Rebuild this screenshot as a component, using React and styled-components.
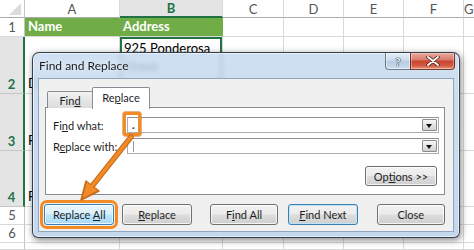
import styled, { createGlobalStyle, css } from 'styled-components'

const GlobalStyle = createGlobalStyle`
  html, body { margin: 0; padding: 0; background: #ffffff; }
  *, *::before, *::after { box-sizing: border-box; }
`

const UI_FONT = `Lato, 'Open Sans', 'Noto Sans', sans-serif`
const CELL_FONT = `Lato, 'Liberation Sans', sans-serif`
const GRID = '#d9d9d9'
const XL_GREEN = '#217346'
const ORANGE = '#f28b25'

const COLS = ['A', 'B', 'C', 'D', 'E', 'F', 'G']

// row 7 only peeks in at the bottom edge, its number lies below the window
const ROWS = [
  { n: 1, cells: { A: { text: 'Name', fill: '#70ad47' }, B: { text: 'Address', fill: '#70ad47' } } },
  { n: 2, active: true, cells: { A: { text: 'D' }, B: { text: '925 Ponderosa Street', top: true, boxed: true } } },
  { n: 3, active: true, cells: { A: { text: 'F' } } },
  { n: 4, active: true, cells: { A: { text: 'F' } } },
  { n: 5 },
  { n: 6 },
  { n: 7, hidden: true },
]

const App = () => {
  return (
    <>
      <GlobalStyle />
      <Sheet>
        <Corner />
        {COLS.map(c => (
          <ColHead key={c} $active={c === 'B'}>{c}</ColHead>
        ))}
        {ROWS.map(row => (
          <Row key={row.n} row={row} />
        ))}

        <Dialog>
          <TitleBar>
            <Title>Find and Replace</Title>
            <CaptionButtons>
              <HelpButton>?</HelpButton>
              <CloseButton>
                <svg width='14' height='10' viewBox='0 0 14 10'>
                  <path d='M2 1 L12 9 M12 1 L2 9' stroke='#4a1c14' strokeWidth='3.4' strokeLinecap='round' />
                  <path d='M2 1 L12 9 M12 1 L2 9' stroke='#ffffff' strokeWidth='1.9' strokeLinecap='round' />
                </svg>
              </CloseButton>
            </CaptionButtons>
          </TitleBar>

          <Client>
            <TabStrip>
              <Tab>Fin<u>d</u></Tab>
              <Tab $active>Re<u>p</u>lace</Tab>
            </TabStrip>
            <TabPanel>
              <FormGrid>
                <Label>Fi<u>n</u>d what:</Label>
                <Field>
                  <FieldText>.</FieldText>
                  <Marker />
                  <DropButton />
                </Field>
                <Label>R<u>e</u>place with:</Label>
                <Field>
                  <Caret />
                  <DropButton />
                </Field>
              </FormGrid>
              <OptionsRow>
                <Button $w={72} $h={20}>Op<u>t</u>ions &gt;&gt;</Button>
              </OptionsRow>
            </TabPanel>

            <ButtonRow>
              <Button $w={71} $hot $marked>Replace <u>A</u>ll</Button>
              <Button $w={70} $gap={8}><u>R</u>eplace</Button>
              <Button $w={69} $gap={18}>F<u>i</u>nd All</Button>
              <Button $w={70} $gap={10} $default><u>F</u>ind Next</Button>
              <Button $w={69} $gap={19}>Close</Button>
            </ButtonRow>
          </Client>
        </Dialog>

        <Arrow width='474' height='250' viewBox='0 0 474 250'>
          <line x1='131' y1='137' x2='93' y2='185' stroke='#c96a1c' strokeWidth='5.5' strokeLinecap='round' />
          <polygon points='81,200 99,191 86,181' fill='#c96a1c' stroke='#c96a1c' strokeWidth='1.5' strokeLinejoin='round' />
          <line x1='131' y1='137' x2='93' y2='185' stroke={ORANGE} strokeWidth='3.5' strokeLinecap='round' />
          <polygon points='82.5,198 97.5,190.5 87,182' fill={ORANGE} />
        </Arrow>
      </Sheet>
    </>
  )
}

const Row = ({ row }) => (
  <>
    <RowHead $active={row.active}>{row.hidden ? null : row.n}</RowHead>
    {COLS.map(c => {
      const cell = (row.cells && row.cells[c]) || {}
      return (
        <Cell key={c} $fill={cell.fill} $top={cell.top} $boxed={cell.boxed}>
          {cell.text}
        </Cell>
      )
    })}
  </>
)

export default App

const Sheet = styled.div`
  position: relative;
  width: 474px;
  height: 250px;
  overflow: hidden;
  display: grid;
  grid-template-columns: 25px 95px 103px 61px 60px 60px 60px 1fr;
  grid-template-rows: 18px 19px 57px 57px 56px 18px 18px 1fr;
  background: #fff;
  font-family: ${CELL_FONT};
`

const Corner = styled.div`
  position: relative;
  background: #fff;
  border-right: 1px solid #c6c6c6;
  border-bottom: 1px solid #ababab;

  &::after {
    content: '';
    position: absolute;
    right: 3px;
    bottom: 2px;
    border-style: solid;
    border-width: 0 0 12px 12px;
    border-color: transparent transparent #dcdcdc transparent;
  }
`

const ColHead = styled.div`
  display: flex;
  align-items: center;
  justify-content: center;
  font-size: 13px;
  color: #555;
  background: #fff;
  border-right: 1px solid ${GRID};
  border-bottom: 1px solid #ababab;

  ${({ $active }) => $active && css`
    background: #e4e4e4;
    color: ${XL_GREEN};
    font-weight: 700;
    border-bottom: 2px solid ${XL_GREEN};
  `}
`

const RowHead = styled.div`
  display: flex;
  align-items: flex-end;
  justify-content: center;
  padding-bottom: 1px;
  font-size: 13px;
  line-height: 16px;
  color: #555;
  background: #fff;
  border-right: 1px solid #c6c6c6;
  border-bottom: 1px solid ${GRID};

  ${({ $active }) => $active && css`
    background: #e4e4e4;
    color: ${XL_GREEN};
    font-weight: 700;
    border-right: 2px solid ${XL_GREEN};
    border-bottom-color: #c6c6c6;
  `}
`

const Cell = styled.div`
  display: flex;
  align-items: ${({ $top }) => ($top ? 'flex-start' : 'flex-end')};
  padding: ${({ $top }) => ($top ? '2px 4px 0 4px' : '0 3px 1px 3px')};
  font-size: 13px;
  line-height: 18px;
  overflow: hidden;
  white-space: ${({ $top }) => ($top ? 'normal' : 'nowrap')};
  color: ${({ $fill }) => ($fill ? '#fff' : '#000')};
  font-weight: ${({ $fill }) => ($fill ? 700 : 400)};
  background: ${({ $fill }) => $fill || '#fff'};
  border-right: 1px solid ${({ $fill }) => $fill || GRID};
  border-bottom: 1px solid ${GRID};

  ${({ $boxed }) => $boxed && css`
    box-shadow: inset 0 0 0 2px ${XL_GREEN};
  `}
`

const Dialog = styled.div`
  position: absolute;
  left: 32px;
  top: 52px;
  width: 428px;
  height: 186px;
  z-index: 2;
  display: flex;
  flex-direction: column;
  padding: 0 5px 5px;
  border: 1px solid rgba(38, 46, 58, 0.9);
  border-radius: 7px 7px 6px 6px;
  background: linear-gradient(180deg, rgba(198, 218, 240, 0.84) 0%, rgba(185, 207, 233, 0.84) 100%);
  backdrop-filter: blur(2.5px);
  box-shadow: 1px 2px 7px rgba(0, 0, 0, 0.5), inset 0 0 0 1px rgba(255, 255, 255, 0.55);
  font-family: ${UI_FONT};
  color: #1e1e1e;
`

const TitleBar = styled.div`
  height: 25px;
  display: flex;
  align-items: flex-start;
`

const Title = styled.span`
  padding: 5px 0 0 1px;
  font-size: 12px;
  color: #1a1a1a;
  text-shadow: 0 0 6px rgba(255, 255, 255, 0.9);
`

const CaptionButtons = styled.div`
  margin-left: auto;
  margin-right: -1px;
  display: flex;
`

const HelpButton = styled.div`
  width: 25px;
  height: 17px;
  display: flex;
  align-items: center;
  justify-content: center;
  border: 1px solid rgba(40, 52, 70, 0.6);
  border-top: none;
  border-right: none;
  border-radius: 0 0 0 4px;
  background: linear-gradient(180deg, #e4edf7 0%, #ccdced 45%, #b7cbe1 52%, #c9dbee 100%);
  box-shadow: inset 0 0 0 1px rgba(255, 255, 255, 0.5);
  font-size: 12px;
  font-weight: 700;
  color: #f4f7fb;
  text-shadow: 0 0 1px #2a3440, 0 0 1px #2a3440, 0 0 1px #2a3440;
`

const CloseButton = styled.div`
  width: 45px;
  height: 17px;
  display: flex;
  align-items: center;
  justify-content: center;
  border: 1px solid rgba(70, 20, 14, 0.7);
  border-top: none;
  border-radius: 0 0 4px 0;
  background: linear-gradient(180deg, #e8aa9e 0%, #d97d6c 42%, #c8442f 52%, #d35c45 80%, #e59780 100%);
  box-shadow: inset 0 0 0 1px rgba(255, 220, 210, 0.45);
`

const Client = styled.div`
  flex: 1;
  display: flex;
  flex-direction: column;
  padding: 7px 8px 0 6px;
  background: #f0f0f0;
  border: 1px solid #8fa6c1;
`

const TabStrip = styled.div`
  height: 22px;
  display: flex;
  align-items: flex-end;
  padding-left: 2px;
  position: relative;
  z-index: 1;
`

const Tab = styled.div`
  height: 17px;
  width: 46px;
  display: flex;
  align-items: center;
  justify-content: center;
  font-size: 11px;
  border: 1px solid #898c95;
  border-bottom: none;
  border-radius: 2px 2px 0 0;
  background: linear-gradient(180deg, #f3f3f3 0%, #e6e6e6 50%, #dcdcdc 100%);

  ${({ $active }) => $active && css`
    height: 22px;
    width: 58px;
    margin-left: -1px;
    margin-bottom: -1px;
    padding-bottom: 2px;
    background: #fff;
  `}
`

const TabPanel = styled.div`
  margin-top: -1px;
  height: 88px;
  border: 1px solid #898c95;
  background: #fff;
  padding: 9px 5px 0 7px;
`

const FormGrid = styled.div`
  display: grid;
  grid-template-columns: 74px 1fr;
  grid-auto-rows: 16px;
  row-gap: 5px;
  align-items: center;
`

const Label = styled.span`
  font-size: 11px;
  white-space: nowrap;
`

const Field = styled.div`
  position: relative;
  height: 16px;
  border: 1px solid #abadb3;
  border-top-color: #8e9097;
  background: #fff;
  padding-left: 4px;
  display: flex;
  align-items: center;
`

const FieldText = styled.span`
  font-size: 11px;
  line-height: 14px;
  font-weight: 700;
`

const Caret = styled.span`
  width: 1px;
  height: 11px;
  margin-left: 1px;
  background: #9a9a9a;
`

const Marker = styled.span`
  position: absolute;
  left: -5px;
  top: -6px;
  width: 18px;
  height: 24px;
  border: 3px solid ${ORANGE};
  border-radius: 2px;
  box-shadow: 0 0 0 0.5px #c96a1c;
`

const DropButton = styled.span`
  position: absolute;
  right: 1px;
  top: 1px;
  bottom: 1px;
  width: 15px;
  border: 1px solid #8c8c8c;
  border-radius: 1px;
  background: linear-gradient(180deg, #f6f6f6 0%, #e2e2e2 55%, #d2d2d2 100%);

  &::after {
    content: '';
    position: absolute;
    left: 3px;
    top: 4px;
    border-style: solid;
    border-width: 4px 3.5px 0 3.5px;
    border-color: #111 transparent transparent transparent;
  }
`

const OptionsRow = styled.div`
  display: flex;
  justify-content: flex-end;
  margin-top: 12px;
  padding-right: 2px;
`

const ButtonRow = styled.div`
  display: flex;
  margin-top: 9px;
  margin-left: -1px;
`

const Button = styled.button`
  width: ${({ $w }) => $w}px;
  height: ${({ $h }) => $h || 21}px;
  margin: 0 0 0 ${({ $gap }) => $gap || 0}px;
  padding: 0;
  border: 1px solid #707070;
  border-radius: 3px;
  background: linear-gradient(180deg, #f2f2f2 0%, #ebebeb 48%, #dddddd 52%, #cfcfcf 100%);
  box-shadow: inset 0 0 0 1px rgba(255, 255, 255, 0.75);
  font-family: ${UI_FONT};
  font-size: 11px;
  color: #1e1e1e;

  ${({ $default }) => $default && css`
    border-color: #3c7fb1;
    box-shadow: inset 0 0 0 1px #bfe3f8;
  `}

  ${({ $hot }) => $hot && css`
    border-color: #3c7fb1;
    background: linear-gradient(180deg, #eaf6fd 0%, #d9f0fc 48%, #bee6fd 52%, #a7d9f5 100%);
  `}

  ${({ $marked }) => $marked && css`
    outline: 3px solid ${ORANGE};
    outline-offset: 1px;
  `}
`

const Arrow = styled.svg`
  position: absolute;
  left: 0;
  top: 0;
  z-index: 3;
  pointer-events: none;
`
